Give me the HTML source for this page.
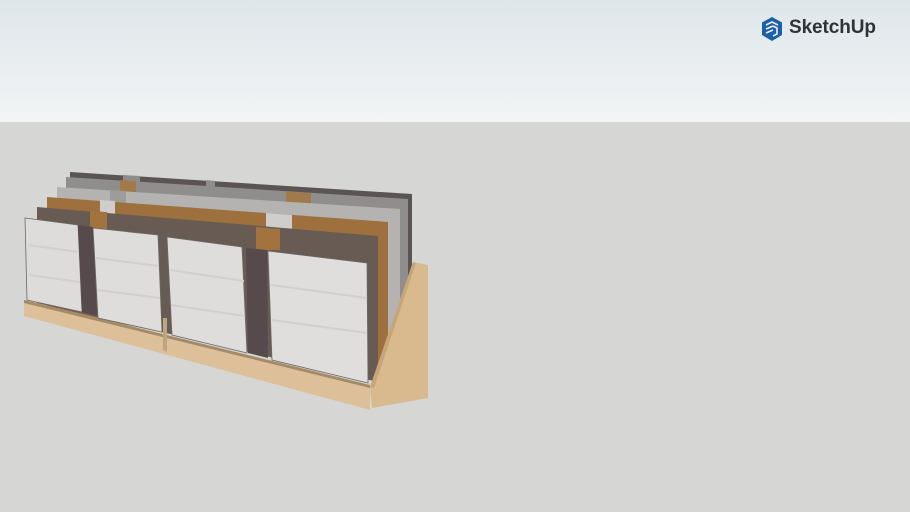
<!DOCTYPE html>
<html><head><style>
html,body{margin:0;padding:0;width:910px;height:512px;overflow:hidden}
body{background:#d6d6d4;position:relative;font-family:"Liberation Sans",sans-serif}
.sky{position:absolute;left:0;top:0;width:910px;height:122px;background:linear-gradient(#dfe6ea,#f2f4f5)}
.logo{position:absolute;left:789px;top:17px;font-size:19px;font-weight:bold;color:#2f3237;letter-spacing:-0.1px}
</style></head><body>
<div class="sky"></div>
<svg style="position:absolute;left:761px;top:17px" width="22" height="24" viewBox="0 0 22 24">
<path d="M11 0 L21 5.5 L21 18 L11 24 L1 18 L1 5.5 Z" fill="#1b5fa6"/>
<path d="M5 8 L11 5 L17 8 M5 12 L12 9 M5 16 L12 13 M12 9 L16 11 L16 17 L12 19" stroke="#e9f0f8" stroke-width="1.6" fill="none"/>
</svg>
<div class="logo">SketchUp</div>
<svg style="position:absolute;left:0;top:0" width="910" height="512">
<polygon points="70,172 412,194 412,290 70,290" fill="#5b5454"/>
<polygon points="123,175 140,176 140,200 123,200" fill="#8f8d8c"/>
<polygon points="206,180 215,181 215,200 206,200" fill="#8f8d8c"/>
<polygon points="66,177 408,199 408,300 66,300" fill="#8f8e8c"/>
<polygon points="120,180 136,181 136,200 120,200" fill="#a07a4a"/>
<polygon points="286,191 311,193 311,210 286,210" fill="#a07a4a"/>
<polygon points="57,187 400,209 400,370 57,310" fill="#b4b3b1"/>
<polygon points="110,190 126,191 126,210 110,210" fill="#9d9c9a"/>
<polygon points="47,197 388,222 388,380 47,308" fill="#9e703e"/>
<polygon points="100,200 115,201 115,220 100,220" fill="#cfcecd"/>
<polygon points="266,213 292,215 292,232 266,232" fill="#cfcecd"/>
<polygon points="37,207 378,236 378,382 37,303" fill="#675b54"/>
<polygon points="90,211 107,212 107,230 90,230" fill="#a2733f"/>
<polygon points="256,227 280,229 280,250 256,250" fill="#a2733f"/>
<polygon points="370,387 413,262 428,265 428,398 372,408" fill="#d9b98e"/>
<polygon points="370,387 413,262 416,263 374,388" fill="#c6a577"/>
<polygon points="24,300 370,385 370,410 24,316" fill="#ddc099"/>
<polygon points="24,300 370,385 370,388 24,303" fill="#a48a66"/>
<polygon points="163,318 167,318 167,352 163,350" fill="#bfa57f"/>
<polygon points="25,218 78,225 82,312 27,300" fill="#dedcda" stroke="#6b6866" stroke-width="0.8"/>
<polygon points="78,225 93,227 97,316 82,312" fill="#564a4c"/>
<polygon points="93,228 158,235 162,332 98,318" fill="#dfdddb" stroke="#6b6866" stroke-width="0.8"/>
<polygon points="167,237 242,247 247,353 172,335" fill="#dfdddb" stroke="#6b6866" stroke-width="0.8"/>
<polygon points="246,248 267,250 268,358 248,353" fill="#564a4c"/>
<polygon points="268,251 367,263 368,383 272,360" fill="#e0dedc" stroke="#6b6866" stroke-width="0.8"/>
<g stroke="#d2d0ce" stroke-width="2" fill="none">
<path d="M28 245 L79 252 M29 275 L80 282 M96 258 L159 266 M97 290 L160 298 M170 270 L244 281 M171 305 L245 316 M271 285 L367 298 M272 320 L367 333"/>
</g>
</svg>
</body></html>
